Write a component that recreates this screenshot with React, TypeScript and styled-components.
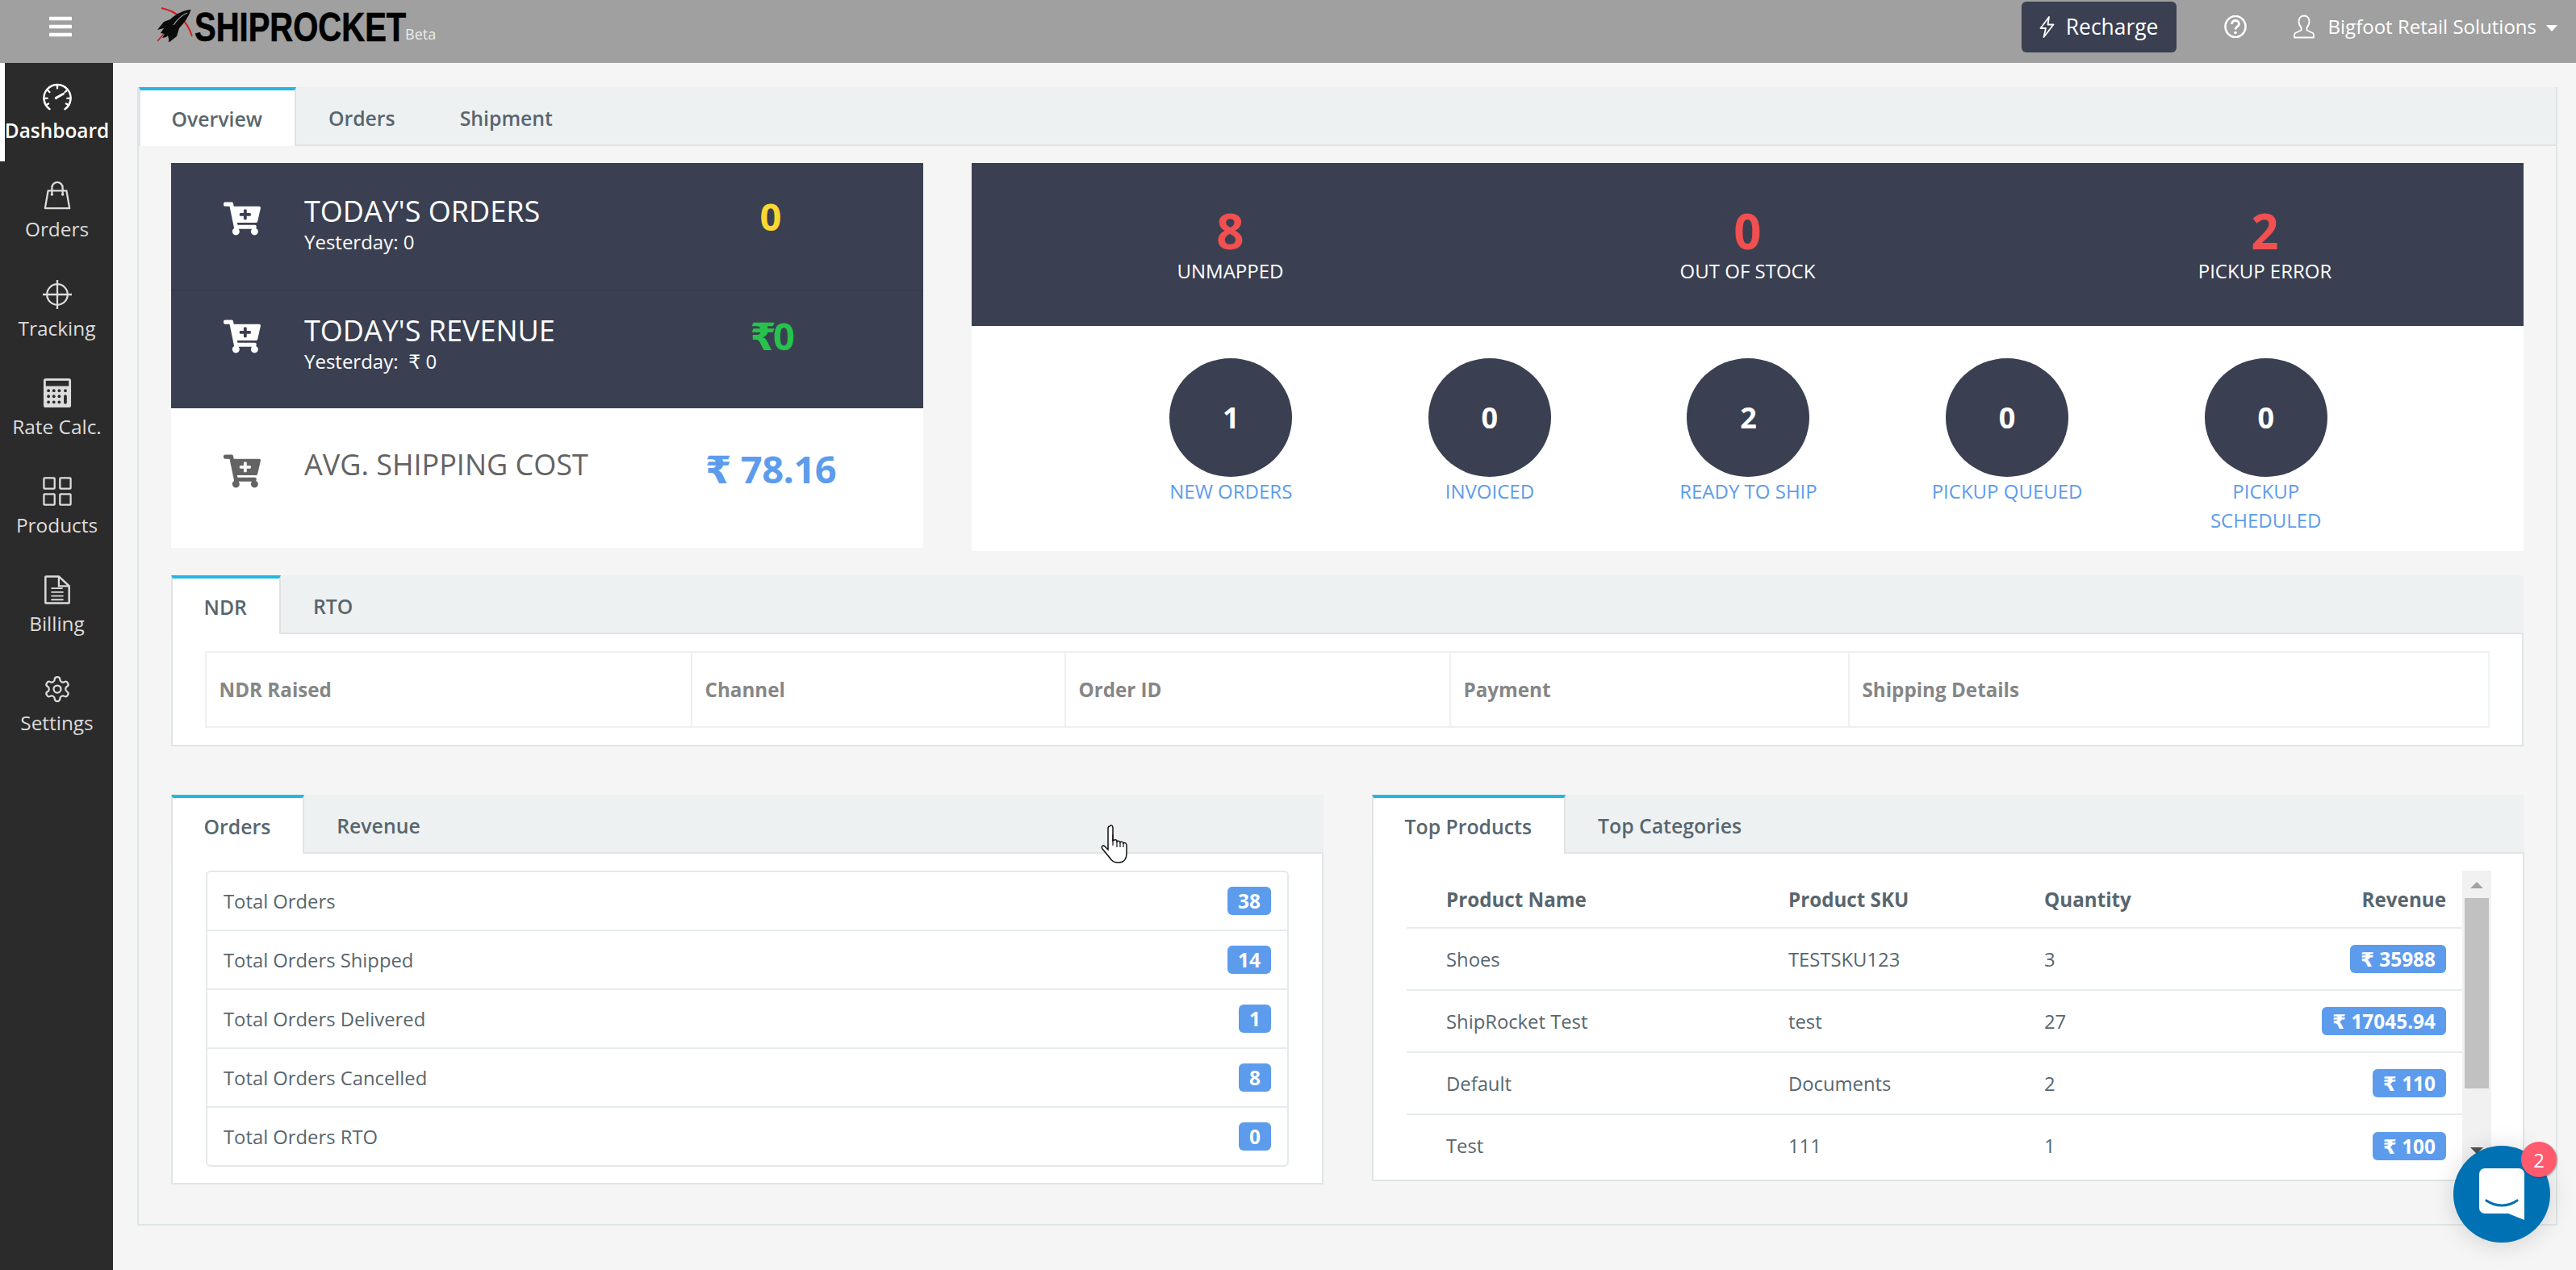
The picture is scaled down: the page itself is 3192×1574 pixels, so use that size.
import React from "react";
import styled, { createGlobalStyle } from "styled-components";
import { FaBars, FaCartPlus } from "react-icons/fa";

const dark = "#3a3f51";
const blue = "#5d9cec";
const text = "#58666e";
const line = "#dee5e7";

const GlobalStyle = createGlobalStyle`
  html, body {
    margin: 0;
    padding: 0;
    background: #f5f5f5;
    font-family: "Open Sans", "DejaVu Sans", sans-serif;
  }
  * {
    box-sizing: border-box;
  }
`;

const Page = styled.div`
  position: relative;
  width: 3192px;
  height: 1574px;
  overflow: hidden;
  display: flex;
  flex-direction: column;
  background: #f5f5f5;
`;

const TopBar = styled.header`
  height: 78px;
  flex: none;
  padding-bottom: 13px;
  background: #a0a0a0;
  display: flex;
  align-items: center;
`;

const Burger = styled.div`
  width: 195px;
  padding-left: 59px;
  flex: none;
  display: flex;
  color: #fff;
  font-size: 32px;
`;

const Logo = styled.div`
  display: flex;
  align-items: flex-start;
  align-self: flex-start;
  height: 78px;
  flex: 1;
`;

const LogoMark = styled.svg`
  width: 46px;
  height: 46px;
  margin-top: 8px;
  flex: none;
`;

const LogoWord = styled.div`
  font-family: "Liberation Sans", Arial, sans-serif;
  font-weight: 700;
  font-size: 50px;
  line-height: 50px;
  margin-top: 9px;
  color: #000;
  -webkit-text-stroke: 0.7px #000;
  width: 261px;
  flex: none;
  white-space: nowrap;
  transform: scaleX(0.8);
  transform-origin: left center;
`;

const LogoBeta = styled.span`
  font-size: 18px;
  line-height: 20px;
  margin-top: 32px;
  color: #ececec;
`;

const Recharge = styled.button`
  width: 192px;
  height: 63px;
  margin: 1px 59px 0 0;
  border: none;
  border-radius: 6px;
  background: ${dark};
  color: #fff;
  font: 400 26.4px "Open Sans", sans-serif;
  display: flex;
  align-items: center;
  justify-content: center;
  gap: 14px;
`;

const HelpIcon = styled.svg`
  width: 28px;
  height: 28px;
  margin-right: 58px;
`;

const UserBox = styled.div`
  display: flex;
  align-items: center;
  gap: 17px;
  margin-right: 23px;
  color: #fff;
  font-size: 24px;
`;

const Caret = styled.span`
  width: 0;
  height: 0;
  margin-left: -5px;
  margin-top: 4px;
  border-left: 7px solid transparent;
  border-right: 7px solid transparent;
  border-top: 8px solid #fff;
`;

const Body = styled.div`
  flex: 1;
  display: flex;
  min-height: 0;
`;

const Sidebar = styled.nav`
  width: 140px;
  flex: none;
  background: #2b2b2b;
`;

const NavItem = styled.div<{ $active?: boolean }>`
  height: 122.3px;
  padding-top: 24px;
  display: flex;
  flex-direction: column;
  align-items: center;
  color: ${(p) => (p.$active ? "#fff" : "#dcdcdc")};
  border-left: ${(p) => (p.$active ? "6px solid #fff" : "none")};
  font-size: 24.4px;
  font-weight: ${(p) => (p.$active ? 600 : 400)};
  line-height: 34px;
  white-space: nowrap;
  svg {
    width: 36px;
    height: 36px;
    margin-bottom: 7px;
    margin-left: ${(p) => (p.$active ? "-5px" : "1px")};
    flex: none;
  }
  span {
    margin-left: ${(p) => (p.$active ? "-5px" : "1px")};
  }
`;

const Main = styled.main`
  flex: 1;
  padding: 30px 23px 0 30px;
  min-width: 0;
`;

const Panel = styled.section`
  border-left: 2px solid ${line};
  border-right: 2px solid ${line};
  border-bottom: 2px solid ${line};
  height: 1411px;
`;

const TabBar = styled.div`
  height: 73px;
  background: #edf1f2;
  border-bottom: 2px solid #dfe3e4;
  display: flex;
`;

const Tab = styled.div<{ $active?: boolean }>`
  height: ${(p) => (p.$active ? "73px" : "71px")};
  padding: ${(p) => (p.$active ? "0 40px 0 38.5px" : "4px 40px 0 40px")};
  display: flex;
  align-items: center;
  font-size: 24.8px;
  font-weight: 600;
  color: ${text};
  background: ${(p) => (p.$active ? "#fff" : "transparent")};
  border-top: ${(p) => (p.$active ? "4px solid #23b7e5" : "none")};
  border-right: ${(p) => (p.$active ? "2px solid #dfe3e4" : "none")};
  border-left: ${(p) => (p.$active ? "2px solid #dfe3e4" : "none")};
`;

const Content = styled.div`
  padding: 21px 40px 0;
  display: flex;
  flex-direction: column;
`;

const TopRow = styled.div`
  display: flex;
  gap: 60px;
  align-items: flex-start;
  margin-bottom: 30px;
`;

const StatsCard = styled.div`
  width: 932px;
  flex: none;
`;

const StatRow = styled.div<{ $light?: boolean; $height: number }>`
  height: ${(p) => p.$height}px;
  display: flex;
  background: ${(p) => (p.$light ? "#fff" : dark)};
  color: ${(p) => (p.$light ? "#636363" : "#fff")};
  border-top: ${(p) => (p.$height === 147 ? "1px solid #353a4a" : "none")};
`;

const CartCell = styled.div<{ $top: number }>`
  width: 165px;
  padding: ${(p) => p.$top}px 0 0 65px;
  flex: none;
  font-size: 46px;
  line-height: 0;
`;

const StatText = styled.div<{ $top: number }>`
  width: 460px;
  flex: none;
  padding-top: ${(p) => p.$top}px;
`;

const StatTitle = styled.div`
  font-size: 36px;
  line-height: 44px;
  white-space: nowrap;
`;

const StatSub = styled.div`
  font-size: 24px;
  line-height: 32px;
  white-space: nowrap;
`;

const StatValue = styled.div<{ $color: string; $top: number; $spacing?: number }>`
  width: 236px;
  text-align: center;
  padding-top: ${(p) => p.$top}px;
  color: ${(p) => p.$color};
  font-size: 47px;
  font-weight: 700;
  line-height: 60px;
  letter-spacing: ${(p) => p.$spacing ?? 0}px;
  white-space: nowrap;
`;

const AlertsCard = styled.div`
  flex: 1;
  background: #fff;
`;

const AlertBand = styled.div`
  height: 202px;
  background: ${dark};
  display: grid;
  grid-template-columns: repeat(3, 1fr);
  padding-top: 52px;
`;

const Alert = styled.div`
  text-align: center;
  color: #fff;
  font-size: 24px;
  line-height: 34px;
`;

const AlertNum = styled.div`
  color: #f05050;
  font-size: 60px;
  font-weight: 700;
  line-height: 65px;
`;

const CircleRow = styled.div`
  height: 279px;
  padding: 40px 159px 0 161px;
  display: grid;
  grid-template-columns: repeat(5, 1fr);
`;

const CircleCol = styled.div`
  display: flex;
  flex-direction: column;
  align-items: center;
  text-align: center;
  color: ${blue};
  font-size: 24px;
  line-height: 36px;
`;

const Circle = styled.div`
  width: 152px;
  height: 147px;
  border-radius: 50%;
  background: ${dark};
  color: #fff;
  display: flex;
  align-items: center;
  justify-content: center;
  font-size: 36px;
  font-weight: 700;
`;

const CircleLabel = styled.div`
  width: 190px;
`;

const TablePanel = styled.section<{ $height: number }>`
  display: flow-root;
  height: ${(p) => p.$height}px;
  background: #fff;
  border-left: 2px solid ${line};
  border-right: 2px solid ${line};
  border-bottom: 2px solid ${line};
`;

const FullTable = styled.table`
  border-collapse: collapse;
  table-layout: fixed;
  width: 2829px;
  height: 95px;
  margin: 21px 40px 0;
  th {
    border: 2px solid #edf1f2;
    padding: 0 15.5px;
    text-align: left;
    font-size: 24.2px;
    font-weight: 700;
    color: #868686;
  }
`;

const BottomRow = styled.div`
  display: flex;
  gap: 60px;
  margin-top: 60px;
`;

const HalfCol = styled.div`
  width: 1428px;
  flex: none;
`;

const ListBox = styled.ul`
  list-style: none;
  margin: 21px 41px 0;
  padding: 0;
  border: 2px solid #e4e9eb;
  border-radius: 6px;
`;

const ListRow = styled.li`
  height: 73px;
  padding: 0 20px;
  display: flex;
  align-items: center;
  justify-content: space-between;
  font-size: 23.8px;
  color: ${text};
  border-bottom: 2px solid #e7ecee;
  &:last-child {
    border-bottom: none;
    height: 71px;
  }
`;

const Badge = styled.span`
  height: 35px;
  min-width: 34px;
  padding: 0 13px;
  border-radius: 6px;
  background: ${blue};
  color: #fff;
  font-size: 24.4px;
  font-weight: 700;
  display: inline-flex;
  align-items: center;
  justify-content: center;
  white-space: nowrap;
`;

const ScrollArea = styled.div`
  display: flex;
  margin: 21px 41px 0;
  height: 385px;
`;

const ProductTable = styled.table`
  border-collapse: collapse;
  table-layout: fixed;
  width: 1308px;
  flex: none;
  align-self: flex-start;
  th, td {
    padding: 0;
    font-size: 24.2px;
    text-align: left;
    color: ${text};
    border-bottom: 2px solid #e7ecee;
  }
  th {
    height: 71px;
    font-weight: 700;
  }
  td {
    height: 77px;
    font-size: 23.8px;
  }
  tr:last-child td {
    border-bottom: none;
  }
  th:first-child, td:first-child {
    padding-left: 49px;
  }
  th:last-child, td:last-child {
    padding-right: 20px;
    text-align: right;
  }
`;

const ScrollTrack = styled.div`
  width: 36px;
  flex: none;
  background: #f1f1f1;
  display: flex;
  flex-direction: column;
  align-items: center;
  padding: 0 2px;
`;

const Arrow = styled.span<{ $down?: boolean }>`
  width: 0;
  height: 0;
  margin: ${(p) => (p.$down ? "73px 0 0" : "14px 0 12px")};
  border-left: 8px solid transparent;
  border-right: 8px solid transparent;
  ${(p) =>
    p.$down
      ? "border-top: 8px solid #505050;"
      : "border-bottom: 8px solid #a3a3a3;"}
`;

const ScrollThumb = styled.div`
  width: 30px;
  height: 236px;
  background: #c1c1c1;
  flex: none;
`;

const Pointer = styled.svg`
  position: absolute;
  left: 1364px;
  top: 1022px;
  width: 34px;
  height: 48px;
`;

const Chat = styled.div`
  position: absolute;
  left: 3040px;
  top: 1420px;
  width: 120px;
  height: 120px;
  border-radius: 50%;
  background: #0071b2;
  box-shadow: 0 2px 30px rgba(0, 0, 0, 0.15);
  display: flex;
  align-items: center;
  justify-content: center;
`;

const ChatBadge = styled.span`
  position: absolute;
  left: 84px;
  top: -5px;
  width: 44px;
  height: 44px;
  border-radius: 50%;
  background: #ff5a6e;
  color: #fff;
  font-size: 24px;
  display: flex;
  align-items: center;
  justify-content: center;
  box-shadow: 1px 1px 2px rgba(0, 0, 0, 0.3);
`;

const navIcon = {
  fill: "none",
  stroke: "currentColor",
  strokeWidth: 2.4,
};

const navItems: { label: string; icon: React.ReactNode }[] = [
  {
    label: "Dashboard",
    icon: (
      <svg viewBox="0 0 38 38" {...navIcon} strokeLinecap="round">
        <path d="M9 35 A17.5 17.5 0 1 1 29 35" strokeWidth="2.6" />
        <path d="M19 5v3M7 11l2 2M31 11l-2 2M3 21h3M35 21h-3M5.500 29l2-1M32.500 29l-2-1" />
        <path d="M18 20l9-5" strokeWidth="3" />
        <circle cx="17.500" cy="20.500" r="1.800" fill="currentColor" stroke="none" />
      </svg>
    ),
  },
  {
    label: "Orders",
    icon: (
      <svg viewBox="0 0 38 38" {...navIcon}>
        <path d="M7 13h24l4 23H3z" strokeLinejoin="round" />
        <path d="M12 18V9a7 7 0 0 1 14 0v9" />
        <circle cx="12" cy="18" r="1.800" fill="currentColor" stroke="none" />
        <circle cx="26" cy="18" r="1.800" fill="currentColor" stroke="none" />
      </svg>
    ),
  },
  {
    label: "Tracking",
    icon: (
      <svg viewBox="0 0 38 38" {...navIcon}>
        <circle cx="19" cy="19" r="13.500" />
        <path d="M19 0v38M0 19h38" />
      </svg>
    ),
  },
  {
    label: "Rate Calc.",
    icon: (
      <svg viewBox="0 0 38 38">
        <rect x="1" y="0" width="36" height="38" rx="3" fill="currentColor" />
        <rect x="4" y="3" width="30" height="7" fill="#2b2b2b" />
        <g fill="#2b2b2b">
          <circle cx="7.500" cy="16" r="2" />
          <circle cx="14.500" cy="16" r="2" />
          <circle cx="21.500" cy="16" r="2" />
          <circle cx="29.500" cy="16" r="2" />
          <circle cx="7.500" cy="23.500" r="2" />
          <circle cx="14.500" cy="23.500" r="2" />
          <circle cx="21.500" cy="23.500" r="2" />
          <circle cx="7.500" cy="31" r="2" />
          <circle cx="14.500" cy="31" r="2" />
          <circle cx="21.500" cy="31" r="2" />
          <rect x="27.500" y="21.500" width="4" height="12" rx="2" />
        </g>
      </svg>
    ),
  },
  {
    label: "Products",
    icon: (
      <svg viewBox="0 0 38 38" {...navIcon}>
        <rect x="1.500" y="1.500" width="14" height="14" rx="1" />
        <rect x="22.500" y="1.500" width="14" height="14" rx="1" />
        <rect x="1.500" y="22.500" width="14" height="14" rx="1" />
        <rect x="22.500" y="22.500" width="14" height="14" rx="1" />
      </svg>
    ),
  },
  {
    label: "Billing",
    icon: (
      <svg viewBox="0 0 38 38" {...navIcon}>
        <path d="M21 1.500H4.500a1 1 0 0 0-1 1v33a1 1 0 0 0 1 1h29a1 1 0 0 0 1-1V14z" strokeWidth="2.6" />
        <path d="M21 1.500V14h13.500" />
        <path d="M11 17h15M11 22h16M11 27h16M11 32h16" strokeWidth="2" />
      </svg>
    ),
  },
  {
    label: "Settings",
    icon: (
      <svg viewBox="0 0 24 24" {...navIcon} strokeWidth="1.500" strokeLinejoin="round">
        <path d="M12.220 2h-.44a2 2 0 0 0-2 2v.18a2 2 0 0 1-1 1.730l-.43.25a2 2 0 0 1-2 0l-.15-.08a2 2 0 0 0-2.730.73l-.22.38a2 2 0 0 0 .73 2.730l.15.1a2 2 0 0 1 1 1.720v.51a2 2 0 0 1-1 1.740l-.15.09a2 2 0 0 0-.73 2.730l.22.38a2 2 0 0 0 2.730.73l.15-.08a2 2 0 0 1 2 0l.43.25a2 2 0 0 1 1 1.730V20a2 2 0 0 0 2 2h.44a2 2 0 0 0 2-2v-.18a2 2 0 0 1 1-1.730l.43-.25a2 2 0 0 1 2 0l.15.08a2 2 0 0 0 2.730-.73l.22-.39a2 2 0 0 0-.73-2.730l-.15-.08a2 2 0 0 1-1-1.740v-.5a2 2 0 0 1 1-1.740l.15-.09a2 2 0 0 0 .73-2.730l-.22-.38a2 2 0 0 0-2.730-.73l-.15.08a2 2 0 0 1-2 0l-.43-.25a2 2 0 0 1-1-1.730V4a2 2 0 0 0-2-2z" />
        <circle cx="12" cy="12" r="3" />
      </svg>
    ),
  },
];

const circles = [
  { n: 1, label: "NEW ORDERS" },
  { n: 0, label: "INVOICED" },
  { n: 2, label: "READY TO SHIP" },
  { n: 0, label: "PICKUP QUEUED" },
  { n: 0, label: "PICKUP SCHEDULED" },
];

const orderRows = [
  ["Total Orders", "38"],
  ["Total Orders Shipped", "14"],
  ["Total Orders Delivered", "1"],
  ["Total Orders Cancelled", "8"],
  ["Total Orders RTO", "0"],
];

const products = [
  ["Shoes", "TESTSKU123", "3", "₹ 35988"],
  ["ShipRocket Test", "test", "27", "₹ 17045.94"],
  ["Default", "Documents", "2", "₹ 110"],
  ["Test", "111", "1", "₹ 100"],
];

const App = () => (
  <Page>
    <GlobalStyle />
    <TopBar>
      <Burger>
        <FaBars />
      </Burger>
      <Logo>
        <LogoMark viewBox="0 0 46 46">
          <path d="M5 2Q34 8 43 37" fill="none" stroke="#d9141c" strokeWidth="1.800" />
          <path d="M0 43l8-9M14 44l4-9" fill="none" stroke="#d9141c" strokeWidth="1.600" />
          <path d="M41.700 3.700C33 5 24 8 16 16L8 19 0 29l8-2-4 6 5 1-3 5 5-1 2-2 2 8 9-7 3-10C34 20 39 12 41.700 3.700z" fill="#0a0a0a" />
          <path d="M37 8C30 11 24 17 20 23" fill="none" stroke="#9a9a9a" strokeWidth="1.300" />
        </LogoMark>
        <LogoWord>SHIPROCKET</LogoWord>
        <LogoBeta>Beta</LogoBeta>
      </Logo>
      <Recharge>
        <svg width="19" height="27" viewBox="0 0 19 27" fill="none" stroke="#fff" strokeWidth="1.800">
          <path d="M12 1L1.500 15h6.500L5.500 26 17.500 10.500h-7z" strokeLinejoin="round" />
        </svg>
        Recharge
      </Recharge>
      <HelpIcon viewBox="0 0 28 28" fill="none" stroke="#fff" strokeWidth="2.600">
        <ellipse cx="14" cy="14" rx="12.500" ry="13" />
        <path d="M9.500 11c0-6 9-6 9 0 0 3-4.500 3-4.500 6.500" strokeWidth="2.800" />
        <circle cx="14" cy="21.500" r="1.800" fill="#fff" stroke="none" />
      </HelpIcon>
      <UserBox>
        <svg width="26" height="30" viewBox="0 0 26 30" fill="none" stroke="#fff" strokeWidth="1.800">
          <path d="M13 1.500c-4 0-6.500 3-6.500 7 0 4 1.500 6 3 7.500v3.500L2 23c-1 .6-1 1-1 5.500h24c0-4.500 0-4.900-1-5.500l-7.500-3.500V16c1.500-1.500 3-3.500 3-7.500s-2.500-7-6.500-7z" strokeLinejoin="round" />
        </svg>
        Bigfoot Retail Solutions
        <Caret />
      </UserBox>
    </TopBar>
    <Body>
      <Sidebar>
        {navItems.map((item, i) => (
          <NavItem key={item.label} $active={i === 0}>
            {item.icon}
            <span>{item.label}</span>
          </NavItem>
        ))}
      </Sidebar>
      <Main>
        <Panel>
          <TabBar>
            <Tab $active>Overview</Tab>
            <Tab>Orders</Tab>
            <Tab>Shipment</Tab>
          </TabBar>
          <Content>
            <TopRow>
              <StatsCard>
                <StatRow $height={157}>
                  <CartCell $top={46}>
                    <FaCartPlus />
                  </CartCell>
                  <StatText $top={38}>
                    <StatTitle>TODAY'S ORDERS</StatTitle>
                    <StatSub>Yesterday: 0</StatSub>
                  </StatText>
                  <StatValue $color="#fad733" $top={36}>0</StatValue>
                </StatRow>
                <StatRow $height={147}>
                  <CartCell $top={34}>
                    <FaCartPlus />
                  </CartCell>
                  <StatText $top={28}>
                    <StatTitle>TODAY'S REVENUE</StatTitle>
                    <StatSub>Yesterday:&nbsp; ₹ 0</StatSub>
                  </StatText>
                  <StatValue $color="#27c24c" $top={26} $spacing={-4}>₹0</StatValue>
                </StatRow>
                <StatRow $light $height={173}>
                  <CartCell $top={55}>
                    <FaCartPlus />
                  </CartCell>
                  <StatText $top={48}>
                    <StatTitle>AVG. SHIPPING COST</StatTitle>
                  </StatText>
                  <StatValue $color={blue} $top={45} $spacing={-0.5}>₹ 78.16</StatValue>
                </StatRow>
              </StatsCard>
              <AlertsCard>
                <AlertBand>
                  <Alert><AlertNum>8</AlertNum>UNMAPPED</Alert>
                  <Alert><AlertNum>0</AlertNum>OUT OF STOCK</Alert>
                  <Alert><AlertNum>2</AlertNum>PICKUP ERROR</Alert>
                </AlertBand>
                <CircleRow>
                  {circles.map((c) => (
                    <CircleCol key={c.label}>
                      <Circle>{c.n}</Circle>
                      <CircleLabel>{c.label}</CircleLabel>
                    </CircleCol>
                  ))}
                </CircleRow>
              </AlertsCard>
            </TopRow>
            <TabBar>
              <Tab $active>NDR</Tab>
              <Tab>RTO</Tab>
            </TabBar>
            <TablePanel $height={139}>
              <FullTable>
                <colgroup>
                  <col width="602" />
                  <col width="463" />
                  <col width="477" />
                  <col width="494" />
                  <col width="793" />
                </colgroup>
                <thead>
                  <tr>
                    <th>NDR Raised</th>
                    <th>Channel</th>
                    <th>Order ID</th>
                    <th>Payment</th>
                    <th>Shipping Details</th>
                  </tr>
                </thead>
              </FullTable>
            </TablePanel>
            <BottomRow>
              <HalfCol>
                <TabBar>
                  <Tab $active>Orders</Tab>
                  <Tab>Revenue</Tab>
                </TabBar>
                <TablePanel $height={410}>
                  <ListBox>
                    {orderRows.map(([name, count]) => (
                      <ListRow key={name}>
                        {name}
                        <Badge>{count}</Badge>
                      </ListRow>
                    ))}
                  </ListBox>
                </TablePanel>
              </HalfCol>
              <HalfCol>
                <TabBar>
                  <Tab $active>Top Products</Tab>
                  <Tab>Top Categories</Tab>
                </TabBar>
                <TablePanel $height={406}>
                  <ScrollArea>
                    <ProductTable>
                      <colgroup>
                        <col width="473" />
                        <col width="317" />
                        <col width="220" />
                        <col width="298" />
                      </colgroup>
                      <thead>
                        <tr>
                          <th>Product Name</th>
                          <th>Product SKU</th>
                          <th>Quantity</th>
                          <th>Revenue</th>
                        </tr>
                      </thead>
                      <tbody>
                        {products.map(([name, sku, qty, revenue]) => (
                          <tr key={name}>
                            <td>{name}</td>
                            <td>{sku}</td>
                            <td>{qty}</td>
                            <td><Badge>{revenue}</Badge></td>
                          </tr>
                        ))}
                      </tbody>
                    </ProductTable>
                    <ScrollTrack>
                      <Arrow />
                      <ScrollThumb />
                      <Arrow $down />
                    </ScrollTrack>
                  </ScrollArea>
                </TablePanel>
              </HalfCol>
            </BottomRow>
          </Content>
        </Panel>
      </Main>
    </Body>
    <Pointer viewBox="0 0 34 48">
      <path
        d="M11 2c2-2 4-1 4 2v16l2-1c2-.6 3 0 3 2 1-1 4-1 4 1 1-1 4-1 4 1 2-1 4 0 4 3v10c0 6-3 11-10 11-5 0-8-1-11-6L2 30c-2-3 1-5 3-3l4 4V5c0-2 1-3 2-3z"
        fill="#fff"
        stroke="#111"
        strokeWidth="1.500"
      />
      <path d="M15 12v14M20 21v7M24 22v6M28 22v6" stroke="#111" strokeWidth="1.200" fill="none" />
    </Pointer>
    <Chat>
      <svg width="56" height="64" viewBox="0 0 56 64">
        <path d="M7 0h42a7 7 0 0 1 7 7v57l-20-8H7a7 7 0 0 1-7-7V7a7 7 0 0 1 7-7z" fill="#fff" />
        <path d="M9 40c12 8 26 8 38 0" fill="none" stroke="#0071b2" strokeWidth="3.200" strokeLinecap="round" />
      </svg>
      <ChatBadge>2</ChatBadge>
    </Chat>
  </Page>
);

export default App;
